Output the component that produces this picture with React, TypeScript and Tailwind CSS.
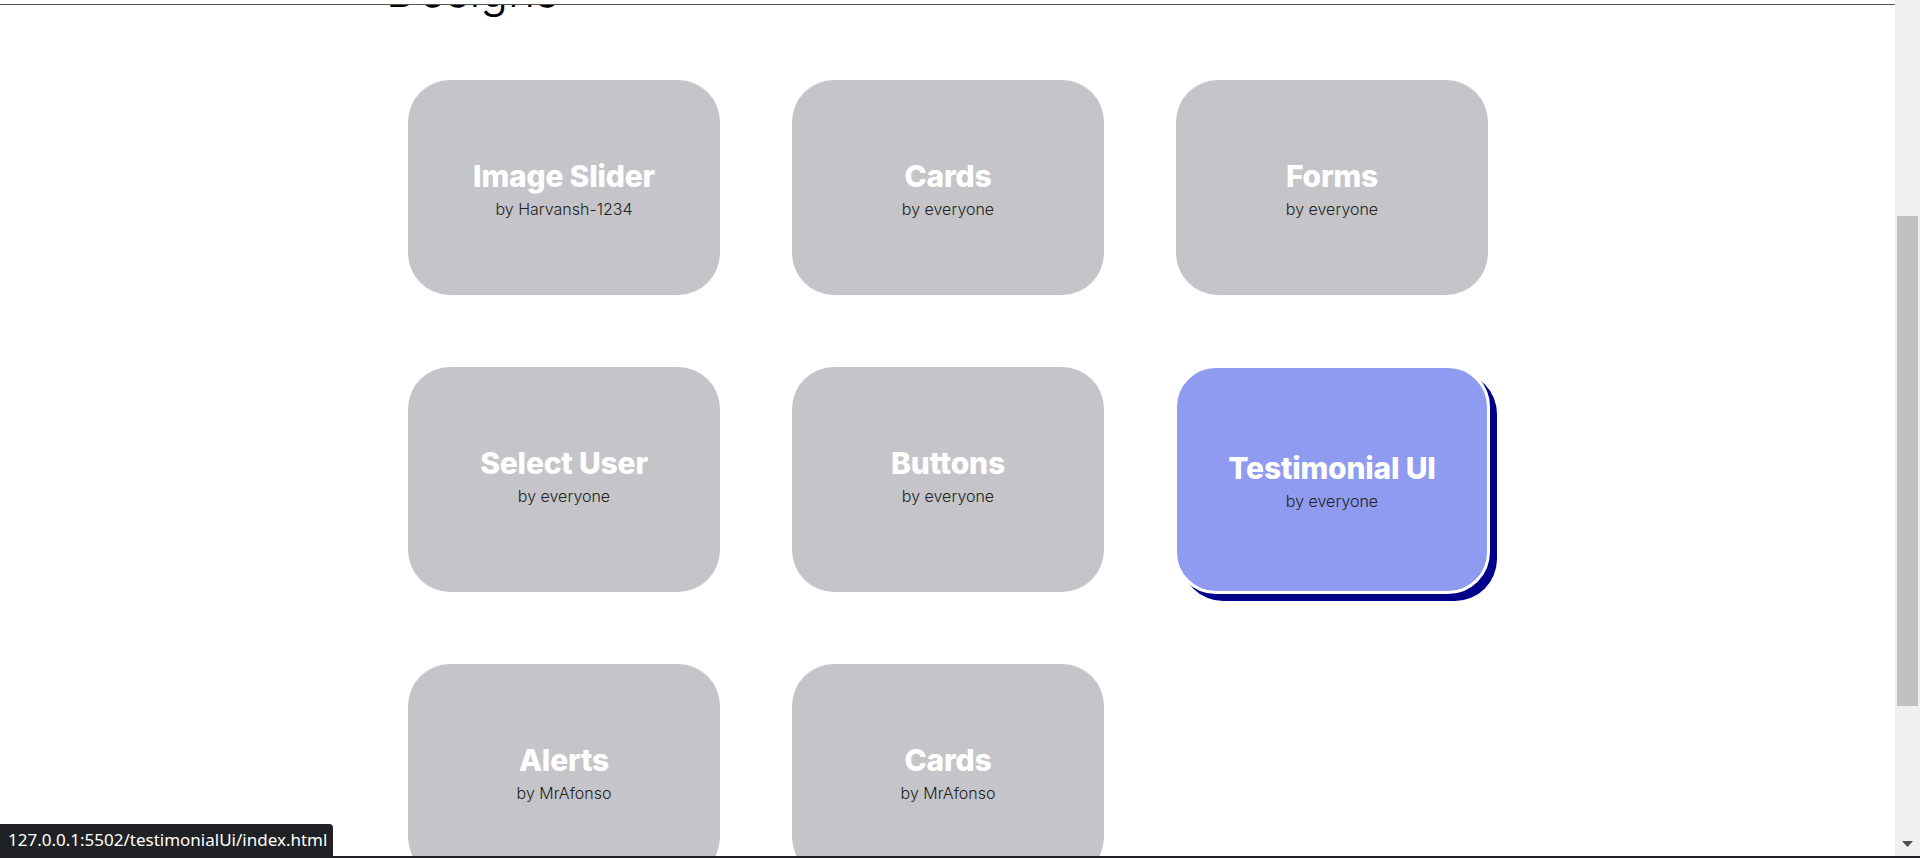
import React from "react";

type Card = { title: string; by: string; active?: boolean };

const cards: Card[] = [
  { title: "Image Slider", by: "by Harvansh-1234" },
  { title: "Cards", by: "by everyone" },
  { title: "Forms", by: "by everyone" },
  { title: "Select User", by: "by everyone" },
  { title: "Buttons", by: "by everyone" },
  { title: "Testimonial UI", by: "by everyone", active: true },
  { title: "Alerts", by: "by MrAfonso" },
  { title: "Cards", by: "by MrAfonso" },
];

function DesignCard({ card }: { card: Card }) {
  if (card.active) {
    return (
      <div className="m-[-2px] flex flex-col items-center rounded-[42px] border-[3px] border-white bg-[#8e9bf0] pt-[82px] shadow-[7px_7px_0_#00008b]">
        <div className="text-[30px] leading-[36px] font-extrabold text-white tracking-[-0.2px]">{card.title}</div>
        <div className="mt-[5px] text-[16px] leading-[20px] font-light text-[#222]">{card.by}</div>
      </div>
    );
  }
  return (
    <div className="flex flex-col items-center rounded-[42px] bg-[#c5c5c9] pt-[78px]">
      <div className="text-[30px] leading-[36px] font-extrabold text-white tracking-[-0.2px]">{card.title}</div>
      <div className="mt-[5px] text-[16px] leading-[20px] font-light text-[#222]">{card.by}</div>
    </div>
  );
}

export default function App() {
  return (
    <div className="relative flex h-[858px] w-full flex-col overflow-hidden bg-white font-['Inter',sans-serif]">
      <div className="flex min-h-0 flex-1">
        <main className="relative min-w-0 flex-1 overflow-hidden">
          <div className="absolute left-0 right-0 top-0 z-10 h-[5px] border-b border-[#555] bg-white" />
          <h1 className="ml-[386px] mt-[-33px] text-[46px] leading-[46px] font-light text-black">Designs</h1>
          <div className="ml-[408px] mt-[67px] grid grid-cols-[312px_312px_312px] grid-rows-[215px_225px_215px] gap-x-[72px] gap-y-[72px]">
            {cards.map((c, i) => (
              <DesignCard key={i} card={c} />
            ))}
          </div>
        </main>
        <div className="flex w-[25px] flex-col bg-[#f0f0f0]">
          <div className="ml-[2px] mt-[216px] h-[490px] w-[21px] bg-[#c1c1c1]" />
          <div className="mt-auto mb-[9px] flex justify-center">
            <svg width="11" height="6" viewBox="0 0 11 6">
              <polygon points="0,0 11,0 5.5,6" fill="#505050" />
            </svg>
          </div>
        </div>
      </div>
      <div className="h-[2px] bg-[#202124]" />
      <div className="absolute bottom-[2px] left-0 flex h-[32px] w-[333px] items-center rounded-tr-[4px] bg-[#202124] pl-[8px] font-['Noto_Sans',sans-serif] text-[17px] text-white">
        127.0.0.1:5502/testimonialUi/index.html
      </div>
    </div>
  );
}
